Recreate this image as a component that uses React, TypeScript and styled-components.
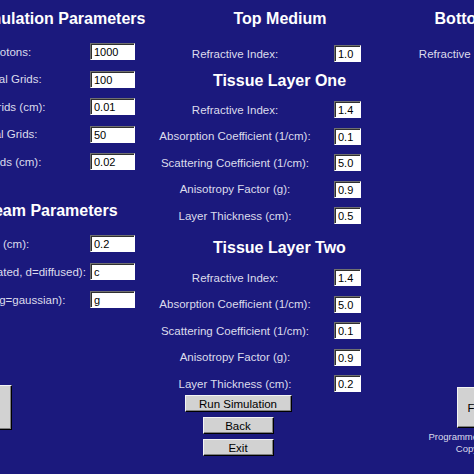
import styled, { createGlobalStyle } from "styled-components";

const GlobalStyle = createGlobalStyle`
  html, body {
    margin: 0;
    padding: 0;
    background: #1b197d;
    overflow: hidden;
  }
  body {
    font-family: "Liberation Sans", Arial, sans-serif;
  }
`;

const Screen = styled.div`
  display: flex;
  gap: 20px;
  width: 760px;
  height: 474px;
  margin-left: -110px;
  padding-top: 10px;
  box-sizing: border-box;
  background: #1b197d;
`;

const Column = styled.div<{ $width: number }>`
  display: flex;
  flex-direction: column;
  flex: none;
  width: ${({ $width }) => $width}px;
`;

const Heading = styled.h2<{ $shift: number; $top?: number }>`
  margin: ${({ $top }) => $top ?? 0}px 0 0;
  padding-left: ${({ $shift }) => $shift}px;
  font-size: 16px;
  line-height: 18px;
  font-weight: 700;
  color: #ffffff;
  text-align: center;
  white-space: nowrap;
`;

const Fields = styled.div<{ $label: number; $input: number; $gap: number; $rowGap: number; $top: number }>`
  display: grid;
  grid-template-columns: ${({ $label }) => $label}px ${({ $input }) => $input}px;
  column-gap: ${({ $gap }) => $gap}px;
  row-gap: ${({ $rowGap }) => $rowGap}px;
  margin-top: ${({ $top }) => $top}px;
  align-items: center;
`;

const Label = styled.label`
  font-size: 11.5px;
  line-height: 14px;
  color: #dcdcec;
  text-align: center;
  white-space: nowrap;
`;

const Field = styled.input`
  box-sizing: border-box;
  width: 100%;
  height: 17px;
  margin: 0;
  padding: 1px 3px 0;
  border: 1px solid;
  border-color: #707070 #ffffff #ffffff #707070;
  box-shadow: inset 1px 1px 0 #303030;
  background: #ffffff;
  color: #000000;
  font-family: "Liberation Sans", Arial, sans-serif;
  font-size: 11px;
  outline: none;
`;

const Button = styled.button<{ $w: number; $h: number }>`
  box-sizing: border-box;
  width: ${({ $w }) => $w}px;
  height: ${({ $h }) => $h}px;
  padding: 0;
  background: #d2d2d2;
  border: 1px solid;
  border-color: #f4f4f4 #000000 #000000 #f4f4f4;
  box-shadow: inset -1px -1px 0 #808080;
  color: #000000;
  font-family: "Liberation Sans", Arial, sans-serif;
  font-size: 11.5px;
  cursor: pointer;
`;

const ButtonStack = styled.div`
  display: flex;
  flex-direction: column;
  align-items: center;
  gap: 5px;
  width: 160px;
  margin-top: 3px;
  padding-left: 3px;
`;

const SideButton = styled.div<{ $left: number; $top: number }>`
  margin: ${({ $top }) => $top}px 0 0 ${({ $left }) => $left}px;
`;

const Credits = styled.div`
  display: flex;
  flex-direction: column;
  align-items: center;
  width: 140px;
  margin: 325px 0 0 36px;
`;

const CreditText = styled.p`
  margin: 3px 0 0;
  font-size: 9.5px;
  line-height: 12px;
  color: #dcdcec;
  text-align: center;
  white-space: nowrap;
`;

type Row = [string, string];

const simulation: Row[] = [
  ["Number of Photons:", "1000"],
  ["Number of Radial Grids:", "100"],
  ["Size of Radial Grids (cm):", "0.01"],
  ["Number of Axial Grids:", "50"],
  ["Size of Axial Grids (cm):", "0.02"],
];

const beam: Row[] = [
  ["Beam Radius (cm):", "0.2"],
  ["Beam Type (c=collimated, d=diffused):", "c"],
  ["Beam Profile (f=flat, g=gaussian):", "g"],
];

const layerOne: Row[] = [
  ["Refractive Index:", "1.4"],
  ["Absorption Coefficient (1/cm):", "0.1"],
  ["Scattering Coefficient (1/cm):", "5.0"],
  ["Anisotropy Factor (g):", "0.9"],
  ["Layer Thickness (cm):", "0.5"],
];

const layerTwo: Row[] = [
  ["Refractive Index:", "1.4"],
  ["Absorption Coefficient (1/cm):", "5.0"],
  ["Scattering Coefficient (1/cm):", "0.1"],
  ["Anisotropy Factor (g):", "0.9"],
  ["Layer Thickness (cm):", "0.2"],
];

const renderRows = (rows: Row[]) =>
  rows.map(([label, value], i) => [
    <Label key={`l${i}`}>{label}</Label>,
    <Field key={`f${i}`} type="text" defaultValue={value} />,
  ]);

export default function App() {
  return (
    <>
      <GlobalStyle />
      <Screen>
        <Column $width={245}>
          <Heading $shift={82}>Simulation Parameters</Heading>
          <Fields $label={180} $input={45} $gap={20} $rowGap={10.5} $top={15}>
            {renderRows(simulation)}
          </Fields>
          <Heading $shift={75} $top={32}>Beam Parameters</Heading>
          <Fields $label={180} $input={45} $gap={20} $rowGap={11} $top={15}>
            {renderRows(beam)}
          </Fields>
          <SideButton $left={59} $top={77}>
            <Button $w={63} $h={45}>Load</Button>
          </SideButton>
        </Column>

        <Column $width={207}>
          <Heading $shift={43}>Top Medium</Heading>
          <Fields $label={160} $input={27} $gap={19} $rowGap={9.5} $top={17}>
            {renderRows([["Refractive Index:", "1.0"]])}
          </Fields>
          <Heading $shift={42} $top={10}>Tissue Layer One</Heading>
          <Fields $label={160} $input={27} $gap={19} $rowGap={9.5} $top={11}>
            {renderRows(layerOne)}
          </Fields>
          <Heading $shift={42} $top={15}>Tissue Layer Two</Heading>
          <Fields $label={160} $input={27} $gap={19} $rowGap={9.5} $top={12}>
            {renderRows(layerTwo)}
          </Fields>
          <ButtonStack>
            <Button $w={107} $h={17}>Run Simulation</Button>
            <Button $w={71} $h={17}>Back</Button>
            <Button $w={71} $h={17}>Exit</Button>
          </ButtonStack>
        </Column>

        <Column $width={207}>
          <Heading $shift={19}>Bottom Medium</Heading>
          <Fields $label={160} $input={27} $gap={19} $rowGap={9.5} $top={17}>
            {renderRows([["Refractive Index:", "1.0"]])}
          </Fields>
          <Credits>
            <Button $w={63} $h={41}>Fluence</Button>
            <CreditText>
              Programmed in Visual Basic
              <br />
              Copyright 2003
            </CreditText>
          </Credits>
        </Column>
      </Screen>
    </>
  );
}
